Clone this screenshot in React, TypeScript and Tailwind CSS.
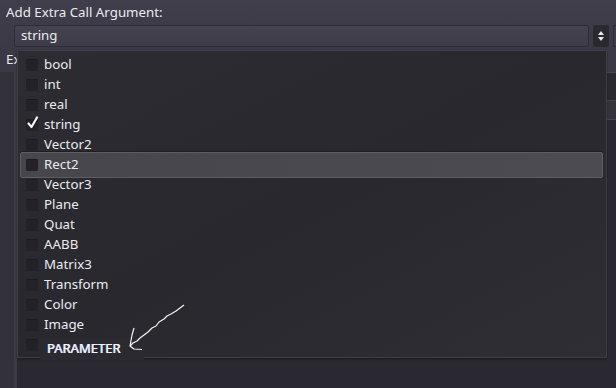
const types = [
  "bool",
  "int",
  "real",
  "string",
  "Vector2",
  "Rect2",
  "Vector3",
  "Plane",
  "Quat",
  "AABB",
  "Matrix3",
  "Transform",
  "Color",
  "Image",
];

function CheckBox({ checked }: { checked?: boolean }) {
  return (
    <span className="relative inline-block h-3 w-3 shrink-0 rounded-[2px] bg-[#232228] shadow-[inset_0_1px_0_#1b1a1f]">
      {checked && (
        <svg
          width="12"
          height="13"
          viewBox="0 0 12 13"
          className="absolute -top-[3px] left-px"
          aria-hidden="true"
        >
          <path
            d="M1.5 7.5 L4.5 11 L10 1.5"
            fill="none"
            stroke="#f2f2f2"
            strokeWidth="2.2"
            strokeLinecap="round"
            strokeLinejoin="round"
          />
        </svg>
      )}
    </span>
  );
}

export default function App() {
  return (
    <div className="relative h-[388px] w-[616px] overflow-hidden bg-[#2c2b34] font-['Noto_Sans','Open_Sans',sans-serif] text-[13.3px] text-[#ebebef]">
      {/* 대화상자 배경 */}
      <div className="bg-gradient-to-b from-[#403e4a] to-[#3b3945] pb-[3px]">
        <p className="px-1.5 pt-[2px] leading-[20px]">Add Extra Call Argument:</p>
        <div className="flex items-stretch gap-1 pl-3.5 pt-[3px]">
          <div className="flex h-[22px] flex-1 items-center rounded-[2px] border border-[#2e2d35] bg-gradient-to-b from-[#45434f] to-[#3d3b47] px-1.5">
            string
          </div>
          <div className="flex h-[22px] w-[16px] items-center justify-center rounded-[2px] bg-[#2a2930]">
            <svg width="6" height="10" viewBox="0 0 6 10" aria-hidden="true">
              <path d="M3 0 L6 4 H0 Z M3 10 L6 6 H0 Z" fill="#e8e8ea" />
            </svg>
          </div>
          <div className="w-[3px] rounded-l-[2px] border border-r-0 border-[#2e2d35] bg-[#3d3b47]" />
        </div>
      </div>

      {/* 팝업 뒤에 가려진 인자 목록 */}
      <p className="h-[22px] bg-[#3b3945] px-1.5 leading-[18px]">Ex</p>
      <div className="flex h-full bg-[#2e2d36]">
        <div className="w-3.5 bg-[#33323b]" />
        <div className="w-[3px] bg-[#3c3b44]" />
        <div className="flex flex-1 flex-col">
          <div className="h-[28px] border-t border-[#4a4953] bg-[#2a2930]" />
          <div className="h-[20px] border-y border-[#46454e] bg-[#35343d]" />
          <div className="flex-1 bg-[#2a2932]" />
        </div>
      </div>

      {/* 타입 선택 팝업 */}
      <div className="absolute left-[17px] top-[50px] h-[308px] w-[590px] border border-[#3f3e45] bg-gradient-to-br from-[#2d2c32] via-[#29282e] to-[#2f2e34] pb-[2px] pt-[4px] shadow-[0_1px_2px_rgba(0,0,0,0.4)]">
        {types.map((t) => (
          <div key={t} className="relative flex h-5 items-center gap-1.5 pl-2">
            {t === "Rect2" && (
              <span className="absolute -bottom-[3px] -top-[3px] left-[2px] right-[3px] rounded-[2px] border border-[#5e5d64] bg-gradient-to-r from-[#47464d] to-[#4c4b52] shadow-[0_-1px_0_#1f1e23]" />
            )}
            <CheckBox checked={t === "string"} />
            <span className="relative leading-none">{t}</span>
          </div>
        ))}
        <div className="relative flex h-5 items-center pl-2">
          <CheckBox />
          <span className="relative -mb-[8px] ml-[2px] flex h-[22px] w-[104px] items-center bg-[#2b2a31] pl-[7px] text-[13px] text-[#f2f6ff] [text-shadow:-0.4px_0_#7fb6ff,0.4px_0_#ffd28a]">
            PARAMETER
          </span>
        </div>

        {/* 손으로 그린 화살표 */}
        <svg
          className="pointer-events-none absolute left-[-17px] top-[-50px]"
          width="616"
          height="388"
          viewBox="0 0 616 388"
          aria-hidden="true"
        >
          <path
            d="M183 304 L179 307 L175 310 L170 313 L166 315 L163 318 L158 321 L155 325 L151 327 L147 331 L143 334 L139 337 L136 340 L132 342 L129 345"
            fill="none"
            stroke="#f4f4f4"
            strokeWidth="1.2"
            strokeLinejoin="round"
          />
          <path
            d="M133 327 L131 334 L129 345 L133 348 L141 348.5"
            fill="none"
            stroke="#f4f4f4"
            strokeWidth="1.2"
            strokeLinejoin="round"
          />
        </svg>
      </div>
    </div>
  );
}
